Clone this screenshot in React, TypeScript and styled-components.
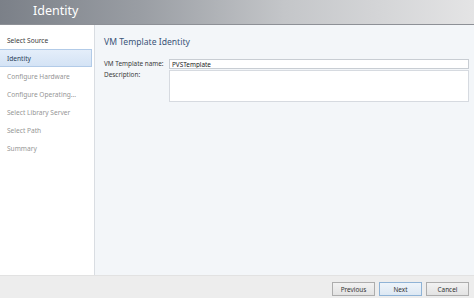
import styled, { createGlobalStyle } from "styled-components";

const steps = [
  "Select Source",
  "Identity",
  "Configure Hardware",
  "Configure Operating...",
  "Select Library Server",
  "Select Path",
  "Summary",
];

const App = () => {
  return (
    <Page>
      <GlobalStyle />
      <Header>
        <HeaderTitle>Identity</HeaderTitle>
      </Header>
      <Body>
        <Sidebar>
          {steps.map((step, i) => (
            <StepItem key={step} $active={i === 1} $done={i === 0}>
              {step}
            </StepItem>
          ))}
        </Sidebar>
        <Main>
          <Title>VM Template Identity</Title>
          <Form>
            <Label>VM Template name:</Label>
            <TextInput defaultValue="PVSTemplate" />
            <Label>Description:</Label>
            <TextArea />
          </Form>
        </Main>
      </Body>
      <Footer>
        <Button>Previous</Button>
        <Button $primary>Next</Button>
        <Button>Cancel</Button>
      </Footer>
    </Page>
  );
};

const GlobalStyle = createGlobalStyle`
  html, body {
    margin: 0;
    padding: 0;
    background: #fff;
  }
  body {
    font-family: "Noto Sans", "Open Sans", sans-serif;
  }
`;

const Page = styled.div`
  width: 474px;
  height: 298px;
  display: flex;
  flex-direction: column;
  overflow: hidden;
`;

const Header = styled.div`
  height: 24px;
  flex: none;
  display: flex;
  align-items: center;
  padding-left: 33px;
  background: linear-gradient(90deg, #7b8088 0%, #9a9ea4 30%, #c4c6c9 60%, #e4e4e5 100%);
  border-bottom: 1px solid #8d9096;
`;

const HeaderTitle = styled.div`
  color: #fff;
  font-size: 12.5px;
  line-height: 18px;
  margin-top: -3px;
`;

const Body = styled.div`
  flex: 1;
  display: flex;
  min-height: 0;
`;

const Sidebar = styled.div`
  width: 94px;
  flex: none;
  background: #fff;
  border-right: 1px solid #d9dde2;
  padding-top: 6px;
`;

const StepItem = styled.div<{ $active?: boolean; $done?: boolean }>`
  height: 18px;
  display: flex;
  align-items: center;
  padding-left: 7px;
  margin-right: 2px;
  box-sizing: border-box;
  font-size: 6.6px;
  white-space: nowrap;
  color: ${(p) => (p.$active ? "#2a3e58" : p.$done ? "#3a3a3a" : "#959595")};
  background: ${(p) =>
    p.$active ? "linear-gradient(180deg, #e4eefa 0%, #d4e3f5 100%)" : "transparent"};
  border: 1px solid ${(p) => (p.$active ? "#b2cbe8" : "transparent")};
  border-left: none;
`;

const Main = styled.div`
  flex: 1;
  background: #f3f6f9;
  padding: 10px 5px 0 9px;
`;

const Title = styled.div`
  color: #3a5478;
  font-size: 8.6px;
  line-height: 14px;
  margin-bottom: 10px;
`;

const Form = styled.div`
  display: grid;
  grid-template-columns: 65px 1fr;
  row-gap: 1px;
  align-items: start;
`;

const Label = styled.div`
  font-size: 6.4px;
  line-height: 10px;
  color: #3a3a3a;
  white-space: nowrap;
`;

const TextInput = styled.input`
  height: 8px;
  box-sizing: content-box;
  padding: 0 2px;
  margin: 0;
  border: 1px solid #c8cdd3;
  background: #fff;
  font-family: inherit;
  font-size: 6.4px;
  color: #222;
  outline: none;
`;

const TextArea = styled.div`
  height: 30px;
  border: 1px solid #d6dae0;
  background: #fff;
`;

const Footer = styled.div`
  height: 23px;
  flex: none;
  display: flex;
  justify-content: flex-end;
  align-items: flex-start;
  gap: 4px;
  padding: 6px 5px 0 0;
  box-sizing: border-box;
  background: #ededed;
  border-top: 1px solid #e2e2e2;
`;

const Button = styled.div<{ $primary?: boolean }>`
  width: 43px;
  height: 14px;
  box-sizing: border-box;
  display: flex;
  align-items: center;
  justify-content: center;
  font-size: 6.4px;
  color: #333;
  border: 1px solid ${(p) => (p.$primary ? "#8fb3d6" : "#adadad")};
  background: ${(p) =>
    p.$primary
      ? "linear-gradient(180deg, #eef4fa 0%, #dde8f3 100%)"
      : "linear-gradient(180deg, #f2f2f2 0%, #e3e3e3 100%)"};
`;

export default App;
